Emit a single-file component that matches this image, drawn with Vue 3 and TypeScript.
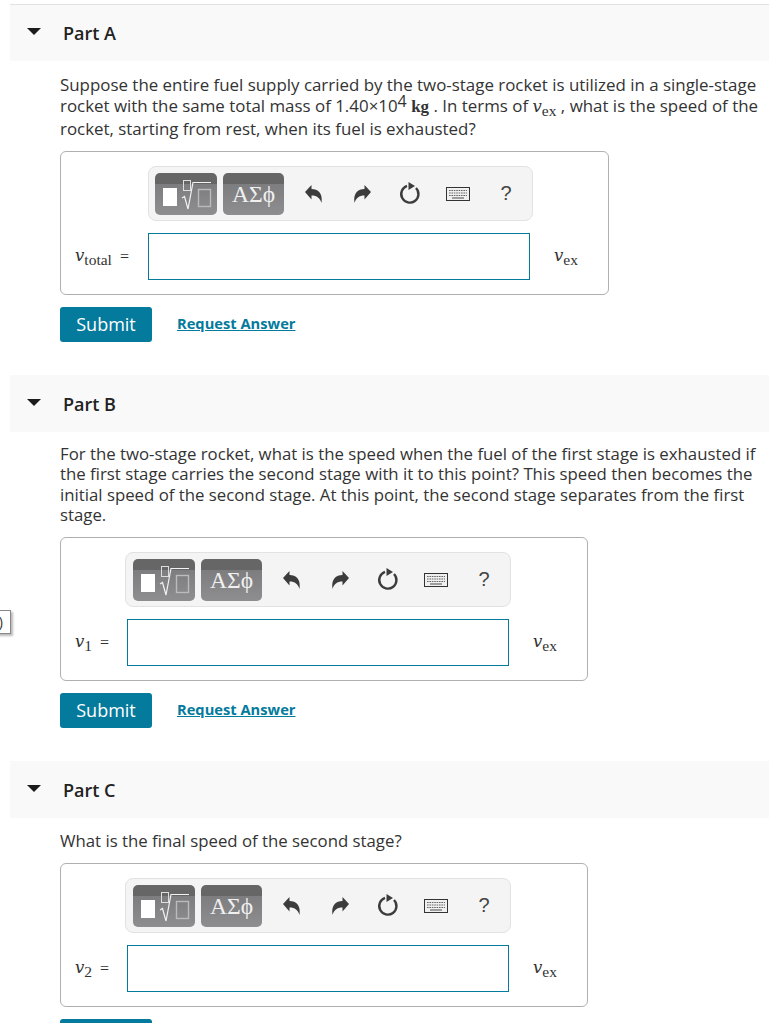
<script setup lang="ts">
const parts = [
  { title: 'Part A', sub: 'total', wide: true, text: '' },
  {
    title: 'Part B',
    sub: '1',
    wide: false,
    text: 'For the two-stage rocket, what is the speed when the fuel of the first stage is exhausted if the first stage carries the second stage with it to this point? This speed then becomes the initial speed of the second stage. At this point, the second stage separates from the first stage.'
  },
  { title: 'Part C', sub: '2', wide: false, text: 'What is the final speed of the second stage?' }
]
</script>

<template>
  <div class="page">
    <div class="side-tab">)</div>
    <section v-for="part in parts" :key="part.title" class="part">
      <header class="part-head">
        <span class="caret"></span>
        <h2>{{ part.title }}</h2>
      </header>
      <div class="part-body">
        <p v-if="part.title === 'Part A'" class="question question-a">
          Suppose the entire fuel supply carried by the two-stage rocket is utilized in a single-stage rocket with the same total mass of 1.40×10<span class="power">4</span> <b class="unit">kg</b> . In terms of <span class="math"><i>v</i><sub>ex</sub></span> , what is the speed of the rocket, starting from rest, when its fuel is exhausted?
        </p>
        <p v-else class="question">{{ part.text }}</p>

        <div class="answer-box" :class="{ wide: part.wide }">
          <div class="toolbar">
            <div class="tool-btn btn-math">
              <svg width="62" height="42" viewBox="0 0 62 42">
                <rect x="8" y="15" width="14" height="18" fill="#fff" />
                <rect x="28.5" y="7.5" width="7" height="10" fill="none" stroke="#ddd" />
                <path d="M27 25 L29.5 23.5 L33 36 L38 9.5 H56" fill="none" stroke="#f2f2f2" stroke-width="1.2" />
                <rect x="43.5" y="16.5" width="12" height="17" fill="none" stroke="#bbb" stroke-width="1.4" />
              </svg>
            </div>
            <div class="tool-btn btn-greek">ΑΣϕ</div>
            <div class="tool-icons">
              <span class="tool-icon">
                <svg width="20" height="22" viewBox="0 0 20 22">
                  <path d="M1 9 L7.5 2 V6 C14 6 19 10 17.5 20 C16 15 13 12.5 7.5 12.5 V16.5 Z" fill="#3c3c3c" />
                </svg>
              </span>
              <span class="tool-icon">
                <svg width="20" height="22" viewBox="0 0 20 22">
                  <path d="M19 9 L12.5 2 V6 C6 6 1 10 2.5 20 C4 15 7 12.5 12.5 12.5 V16.5 Z" fill="#3c3c3c" />
                </svg>
              </span>
              <span class="tool-icon">
                <svg width="22" height="24" viewBox="0 0 22 24">
                  <path d="M8 3.9 A8.6 8.6 0 1 0 17 6" fill="none" stroke="#3c3c3c" stroke-width="2.4" />
                  <path d="M9.5 0 L16 4 L9.5 8 Z" fill="#3c3c3c" />
                </svg>
              </span>
              <span class="tool-icon">
                <svg width="24" height="14" viewBox="0 0 24 14">
                  <rect x="0.5" y="0.5" width="23" height="13" fill="#f0f0f0" stroke="#333" />
                  <path d="M3 3.5 H21 M3 6 H21 M3 8.5 H21" stroke="#666" stroke-width="1.2" stroke-dasharray="1.6 0.8" />
                  <path d="M6 11 H18" stroke="#666" stroke-width="1.2" />
                </svg>
              </span>
              <span class="tool-icon help">?</span>
            </div>
          </div>
          <div class="answer-row">
            <label class="answer-label">
              <span class="math"><i>v</i><sub>{{ part.sub }}</sub></span>
              <span class="equals">=</span>
            </label>
            <input class="answer-input" type="text" />
            <span class="answer-unit math"><i>v</i><sub>ex</sub></span>
          </div>
        </div>

        <div class="actions">
          <button class="submit" type="button">Submit</button>
          <a class="request" href="#">Request Answer</a>
        </div>
      </div>
    </section>
  </div>
</template>

<style>
html,
body {
  overflow: hidden;
  background: #fff;
}
</style>

<style scoped>
.page {
  position: relative;
  width: 759px;
  margin-left: 10px;
  padding-top: 4px;
  font-family: 'Open Sans', 'Noto Sans', sans-serif;
  color: #333;
}

.side-tab {
  position: absolute;
  left: -16px;
  top: 610px;
  width: 17px;
  height: 24px;
  padding-right: 7px;
  border: 1px solid #888;
  background: #fff;
  box-shadow: 2px 2px 2px #bbb;
  font-size: 14px;
  line-height: 22px;
  text-align: right;
  box-sizing: border-box;
}

.part-head {
  display: flex;
  align-items: center;
  height: 57px;
  background: #f9f9f9;
  box-sizing: border-box;
}

.part:first-of-type .part-head {
  border-top: 1px solid #e2e2e2;
}

.caret {
  width: 0;
  height: 0;
  margin-left: 17px;
  margin-right: 22px;
  margin-top: -3px;
  border-left: 7px solid transparent;
  border-right: 7px solid transparent;
  border-top: 7px solid #1c1c1c;
}

h2 {
  margin: 0;
  font-size: 18px;
  font-weight: 600;
  color: #222;
}

.part-body {
  padding: 12px 0 33px 50px;
}

.question {
  margin: 0;
  width: 702px;
  font-size: 16.8px;
  line-height: 20.25px;
}

.part:last-child .question {
  line-height: 21px;
}

.question-a {
  padding-top: 0.5px;
  font-size: 16.9px;
  line-height: 21.5px;
}

.power {
  font-size: 16px;
  line-height: 0;
  vertical-align: 5px;
}

.unit {
  font-family: 'Liberation Serif', serif;
  font-size: 17px;
}

.math {
  font-family: 'Liberation Serif', serif;
  font-size: 15.5px;
  white-space: nowrap;
}

.math i {
  font-family: 'DejaVu Serif', serif;
  font-size: 16.5px;
}

.math sub {
  font-size: 15.5px;
  line-height: 0;
}

.answer-box {
  width: 528px;
  height: 144px;
  margin-top: 12px;
  padding: 14px 20px 0 14px;
  border: 1px solid #b0b0b0;
  border-radius: 6px;
  box-sizing: border-box;
}

.answer-box.wide {
  width: 549px;
}

.toolbar {
  display: flex;
  align-items: center;
  gap: 6px;
  width: 386px;
  height: 55px;
  margin-left: 50px;
  padding-left: 7px;
  background: #f4f4f4;
  border: 1px solid #e2e2e2;
  border-radius: 8px;
  box-sizing: border-box;
}

.wide .toolbar {
  width: 385px;
  margin-left: 73px;
  padding-left: 6px;
}

.tool-btn {
  display: flex;
  flex-shrink: 0;
  align-items: center;
  justify-content: center;
  height: 42px;
  border-radius: 5px;
  background: linear-gradient(#666 0 11px, #7d7d80 11px, #8e8e91 100%);
}

.btn-math {
  width: 62px;
}

.btn-greek {
  width: 61px;
  padding-top: 1px;
  color: #f0f0f0;
  font-family: 'Liberation Serif', serif;
  font-size: 23.5px;
  box-sizing: border-box;
}

.tool-icons {
  display: flex;
  flex-shrink: 0;
}

.tool-icon {
  display: flex;
  align-items: center;
  justify-content: center;
  width: 48px;
  height: 42px;
}

.help {
  font-family: 'Liberation Sans', sans-serif;
  font-size: 20px;
  color: #444;
}

.answer-row {
  display: flex;
  align-items: center;
  margin-top: 12px;
  height: 47px;
}

.answer-row .math {
  margin-top: -2px;
}

.answer-label {
  display: flex;
  align-items: center;
  justify-content: space-between;
  width: 34px;
  margin-right: 18px;
  color: #333;
}

.wide .answer-label {
  width: 54px;
  margin-right: 19px;
}

.equals {
  font-family: 'Liberation Serif', serif;
  font-size: 16px;
}

.answer-input {
  width: 382px;
  height: 47px;
  margin: 0;
  border: 1px solid #047a9c;
  border-radius: 0;
  background: #fff;
  box-sizing: border-box;
  outline: none;
}

.answer-unit {
  margin-left: 24px;
}

.actions {
  display: flex;
  align-items: center;
  margin-top: 12px;
}

.submit {
  width: 92px;
  height: 35px;
  padding: 0 0 2px;
  border: none;
  border-radius: 3px;
  background: #047a9c;
  color: #fff;
  font-family: inherit;
  font-size: 18px;
}

.request {
  margin-left: 25px;
  margin-bottom: 3px;
  color: #047a9c;
  font-size: 14.7px;
  font-weight: 700;
}
</style>
